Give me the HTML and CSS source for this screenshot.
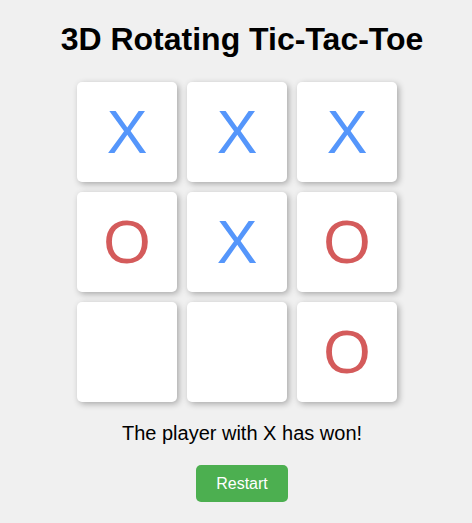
FILE: index.html
```html
<!DOCTYPE html>
<html lang="en">
<head>
<meta charset="utf-8">
<title>3D Rotating Tic-Tac-Toe</title>
<link rel="stylesheet" href="styles.css">
</head>
<body>
<h1 class="title">3D Rotating Tic-Tac-Toe</h1>
<div class="board">
  <div class="cell x">X</div>
  <div class="cell x">X</div>
  <div class="cell x">X</div>
  <div class="cell o">O</div>
  <div class="cell x">X</div>
  <div class="cell o">O</div>
  <div class="cell"></div>
  <div class="cell"></div>
  <div class="cell o">O</div>
</div>
<p class="status">The player with X has won!</p>
<div class="actions"><button class="restart" type="button">Restart</button></div>
</body>
</html>
```
FILE: styles.css
```css
html, body {
  background: #f0f0f0;
}
body {
  margin: 0;
  padding: 0 8px;
  font-family: "Liberation Sans", Arial, sans-serif;
  color: #000;
  text-align: center;
}
.title {
  font-size: 32px;
  font-weight: bold;
  margin: 21.44px 0 24px;
  padding-left: 12px;
}
.board {
  display: grid;
  grid-template-columns: repeat(3, 100px);
  grid-auto-rows: 100px;
  gap: 10px;
  justify-content: center;
  padding-left: 2px;
}
.cell {
  background: #fff;
  border-radius: 5px;
  box-shadow: 2px 2px 6px rgba(0, 0, 0, 0.3);
  display: flex;
  align-items: center;
  justify-content: center;
  font-size: 61px;
  line-height: 1;
}
.cell.x { color: #5596fb; }
.cell.o { color: #d45b5b; }
.status {
  font-size: 20px;
  margin: 20px 0;
  padding-left: 12px;
}
.actions {
  display: flex;
  justify-content: center;
  padding-left: 12px;
}
.restart {
  font-family: "Liberation Sans", Arial, sans-serif;
  font-size: 16px;
  line-height: 17px;
  padding: 10px 20px;
  border: none;
  border-radius: 5px;
  background: #4caf50;
  color: #fff;
  cursor: pointer;
}
```
